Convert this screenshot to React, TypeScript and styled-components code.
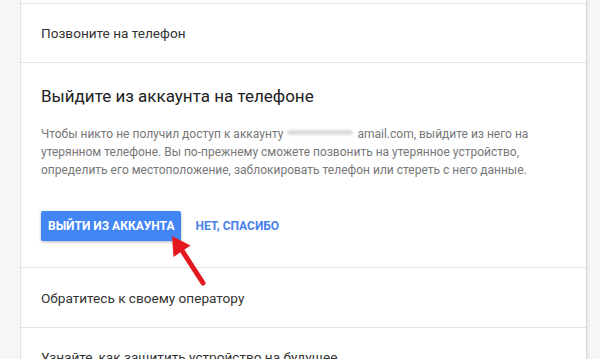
import React from 'react';
import styled, {createGlobalStyle} from 'styled-components';

const GlobalStyle = createGlobalStyle`
  html, body {
    margin: 0;
    padding: 0;
    background: #f6f6f6;
    font-family: Roboto, 'Liberation Sans', Arial, sans-serif;
  }
`;

const Page = styled.div`
  position: relative;
  width: 600px;
  height: 359px;
  overflow: hidden;
  padding-left: 20px;
  box-sizing: border-box;
`;

const Card = styled.div`
  width: 567px;
  box-sizing: border-box;
  background: #ffffff;
  border-left: 1px solid #e2e2e2;
  border-right: 1px solid #d8d8d8;
  box-shadow: 2px 0 2px rgba(0, 0, 0, 0.05);
`;

const Stub = styled.div`
  height: 3px;
  border-bottom: 1px solid #e4e4e4;
`;

const Row = styled.div<{$h: number}>`
  height: ${p => p.$h}px;
  display: flex;
  align-items: center;
  padding: 0 20px;
  font-size: 13.6px;
  color: #333333;
  border-bottom: 1px solid #e4e4e4;
`;

const Section = styled.div`
  padding: 21px 20px 26px;
  border-bottom: 1px solid #e4e4e4;
`;

const Heading = styled.h2`
  margin: 0;
  font-size: 17px;
  line-height: 24px;
  font-weight: 400;
  color: #222222;
`;

const Text = styled.p`
  margin: 17px 0 0;
  width: 495px;
  font-size: 12px;
  line-height: 18px;
  color: #777777;
`;

const Redacted = styled.span`
  display: inline-block;
  width: 66px;
  height: 5px;
  margin: 0 4px;
  vertical-align: 3px;
  border-radius: 3px;
  background: #dcdcdc;
  filter: blur(1px);
`;

const Actions = styled.div`
  margin-top: 32px;
  display: flex;
  align-items: center;
`;

const PrimaryButton = styled.button`
  height: 30px;
  padding: 0 7px;
  border: none;
  border-radius: 2px;
  background: #4285f4;
  color: #ffffff;
  font-family: inherit;
  font-size: 12px;
  font-weight: 700;
  box-shadow: 0 1px 3px rgba(0, 0, 0, 0.3);
`;

const LinkButton = styled.button`
  margin-left: 14px;
  padding: 0;
  border: none;
  background: none;
  color: #4a82e8;
  font-family: inherit;
  font-size: 12px;
  font-weight: 700;
`;

const Arrow = styled.svg`
  position: absolute;
  left: 160px;
  top: 225px;
  pointer-events: none;
`;

export default function App() {
  return (
    <Page>
      <GlobalStyle />
      <Card>
        <Stub />
        <Row $h={58}>Позвоните на телефон</Row>
        <Section>
          <Heading>Выйдите из аккаунта на телефоне</Heading>
          <Text>
            Чтобы никто не получил доступ к аккаунту
            <Redacted />
            amail.com, выйдите из него на утерянном телефоне. Вы по-прежнему
            сможете позвонить на утерянное устройство, определить его
            местоположение, заблокировать телефон или стереть с него данные.
          </Text>
          <Actions>
            <PrimaryButton>ВЫЙТИ ИЗ АККАУНТА</PrimaryButton>
            <LinkButton>НЕТ, СПАСИБО</LinkButton>
          </Actions>
        </Section>
        <Row $h={59}>Обратитесь к своему оператору</Row>
        <Row $h={58}>Узнайте, как защитить устройство на будущее</Row>
      </Card>

      <Arrow width='60' height='70' viewBox='160 225 60 70'>
        <line
          x1='203'
          y1='283'
          x2='183'
          y2='252'
          stroke='#e3191f'
          strokeWidth='5'
          strokeLinecap='round'
        />
        <polygon points='172,236 190.5,245.5 173.5,257' fill='#e3191f' />
      </Arrow>
    </Page>
  );
}
